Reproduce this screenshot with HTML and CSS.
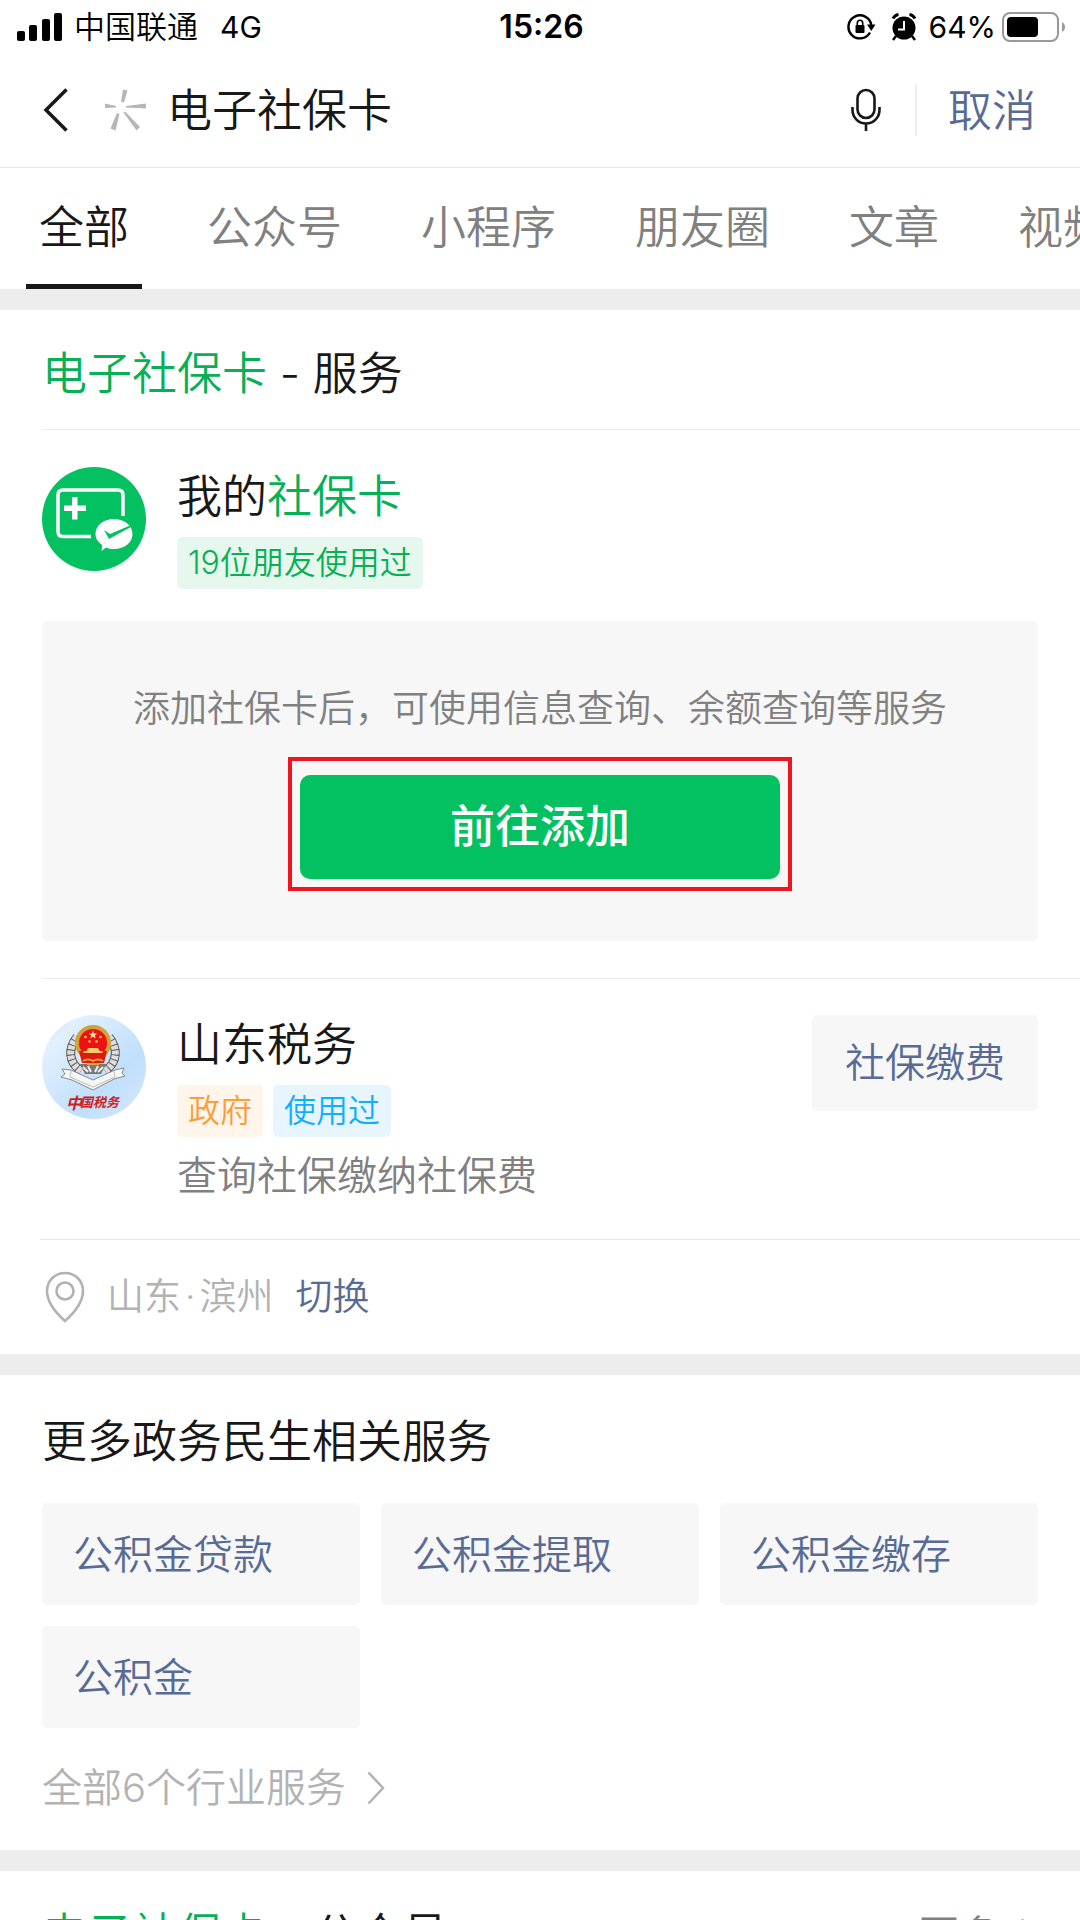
FILE: index.html
```html
<!DOCTYPE html>
<html lang="zh-CN">
<head>
    <meta charset="UTF-8">
    <meta name="viewport" content="width=device-width, initial-scale=1.0">
    <title>电子社保卡</title>
    <link rel="stylesheet" href="styles.css">
</head>
<body>
<div class="page">
    <div class="status-bar">
        <div class="status-left">
            <svg width="46" height="28" viewBox="0 0 46 28">
                <rect x="0" y="18" width="8" height="10" rx="2"/>
                <rect x="12" y="12" width="8" height="16" rx="2"/>
                <rect x="25" y="6" width="8" height="22" rx="2"/>
                <rect x="37" y="0" width="8" height="28" rx="2"/>
            </svg>
            <span class="carrier">中国联通</span>
            <span>4G</span>
        </div>
        <div class="status-time">15:26</div>
        <div class="status-right">
            <svg class="lock-icon" width="29" height="28" viewBox="0 0 29 28">
                <path d="M23 19.5A11.5 11.5 0 1 1 24.3 12" fill="none" stroke="#000" stroke-width="2.4"/>
                <path d="M20 11.5h8.5L24.3 18z"/>
                <rect x="8.5" y="12" width="9" height="8" rx="1"/>
                <path d="M10.3 12.5V10a2.7 2.7 0 0 1 5.4 0v2.5" fill="none" stroke="#000" stroke-width="1.6"/>
            </svg>
            <svg class="alarm-icon" width="26" height="28" viewBox="0 0 26 28">
                <circle cx="13" cy="15" r="11.5"/>
                <path d="M2 5.500Q4 2 7.500 1.500M24 5.500Q22 2 18.500 1.500" fill="none" stroke="#000" stroke-width="3"/>
                <path d="M5 23l-3 4M21 23l3 4" stroke="#000" stroke-width="2.5"/>
                <path d="M13 8v8.500H7" fill="none" stroke="#fff" stroke-width="2"/>
            </svg>
            <span>64%</span>
            <svg class="battery-icon" width="64" height="30" viewBox="0 0 64 30">
                <rect x="1" y="1" width="55" height="28" rx="7" fill="none" stroke="#999" stroke-width="2"/>
                <rect x="5" y="5" width="31" height="20" rx="4"/>
                <path d="M60 10c4 2 4 8 0 10z" fill="#999"/>
            </svg>
        </div>
    </div>

    <header class="search-bar">
        <button class="back-btn" aria-label="返回">
            <svg width="26" height="44" viewBox="0 0 26 44">
                <path d="M23.500 1.500L3 22l20.500 20.500" fill="none" stroke="#181818" stroke-width="3.5"/>
            </svg>
        </button>
        <svg class="search-logo" width="44" height="44" viewBox="0 0 44 44" fill="#b6b6b6">
            <path d="M19 1.500l4.500 1-3.500 12-3-1z"/>
            <path d="M1 15.500l11 2.500v1.500L1 20z"/>
            <path d="M22 18l20-2.500v5l-20-1z"/>
            <path d="M13 25l2.500 1-4 16.500-5-2z"/>
            <path d="M19.500 24.500l1.500-1L36 39l-3.500 3.500z"/>
        </svg>
        <input class="search-input" type="text" aria-label="搜索" value="电子社保卡">
        <button class="mic-btn" aria-label="语音">
            <svg width="32" height="44" viewBox="0 0 32 44" fill="none" stroke="#181818" stroke-width="2.6">
                <rect x="7.500" y="2" width="17" height="28" rx="8.500"/>
                <path d="M2.500 19v3a13.500 13.500 0 0 0 27 0v-3M16 35.500V43"/>
            </svg>
        </button>
        <button class="cancel-btn">取消</button>
    </header>

    <nav class="tabs">
        <a class="tab active" href="#">全部</a>
        <a class="tab" href="#">公众号</a>
        <a class="tab" href="#">小程序</a>
        <a class="tab" href="#">朋友圈</a>
        <a class="tab" href="#">文章</a>
        <a class="tab" href="#">视频</a>
    </nav>

    <section class="section">
        <h2 class="section-title"><span><em>电子社保卡</em> - 服务</span></h2>

        <div class="service">
            <svg class="avatar" viewBox="0 0 104 104">
                <circle cx="52" cy="52" r="52" fill="#03c160"/>
                <path d="M49 69.500H21q-5 0-5-5V28q0-5 5-5h55q5 0 5 5v21" fill="none" stroke="#fff" stroke-width="3.500"/>
                <path d="M30 30h5.500v8.500H44V44h-8.500v8.500H30V44h-8v-5.500h8z" fill="#fff"/>
                <path d="M72 52c10.500 0 18.500 6.500 18.500 15S82.500 82 72 82c-3 0-5.500-.500-8-1.500L59.500 84l.800-6C56 75.500 53.500 71.500 53.500 67c0-8.500 8-15 18.500-15z" fill="#fff"/>
                <path d="M62 63l6 4 20-8.500.500 1.800L67 72z" fill="#03c160"/>
            </svg>
            <div class="service-body">
                <h3 class="service-name">我的<em>社保卡</em></h3>
                <div class="tags">
                    <span class="tag tag-green">19位朋友使用过</span>
                </div>
            </div>
        </div>

        <div class="add-panel">
            <p>添加社保卡后，可使用信息查询、余额查询等服务</p>
            <div class="add-frame">
                <button class="add-btn">前往添加</button>
            </div>
        </div>

        <div class="service service-tax">
            <svg class="avatar" viewBox="0 0 104 104">
                <defs>
                    <linearGradient id="sky" x1="0" y1="0" x2="1" y2="1">
                        <stop offset="0" stop-color="#cfe6fc"/>
                        <stop offset=".2" stop-color="#e2f0fe"/>
                        <stop offset=".65" stop-color="#bfdffb"/>
                        <stop offset="1" stop-color="#d6e9fb"/>
                    </linearGradient>
                </defs>
                <circle cx="52" cy="52" r="52" fill="url(#sky)"/>
                <!-- wreath -->
                <path d="M35 22c-9 11-9 25 4 34M67 22c9 11 9 25-4 34" fill="none" stroke="#555" stroke-width="9"/>
                <path d="M35 22c-9 11-9 25 4 34M67 22c9 11 9 25-4 34" fill="none" stroke="#ddd" stroke-width="7" stroke-dasharray="4 1"/>
                <path d="M38 49h26l-5 10H43z" fill="#777"/>
                <path d="M41 52l5 5M46 51l3 6M61 52l-5 5M56 51l-3 6" stroke="#eee" stroke-width="2"/>
                <!-- national emblem -->
                <circle cx="51" cy="28" r="18" fill="#cfa23a"/>
                <circle cx="51" cy="28" r="14" fill="#ee1111"/>
                <path d="M37 36h28l-3 12H40z" fill="#dc1a12"/>
                <path d="M51 15.500l1.200 3h3l-2.400 2 1 3-2.800-1.800-2.800 1.800 1-3-2.400-2h3z" fill="#ffe29a"/>
                <g fill="#ffc86a">
                    <circle cx="43.500" cy="22" r="1.300"/>
                    <circle cx="47.500" cy="26.500" r="1.300"/>
                    <circle cx="54.500" cy="26.500" r="1.300"/>
                    <circle cx="58.500" cy="22" r="1.300"/>
                    <path d="M46 33h10l1.500 3h3v2h-19v-2h3z"/>
                </g>
                <path d="M41 46q5-3 10 0 5-3 10 0M45 49h12" fill="none" stroke="#dba83b" stroke-width="2"/>
                <!-- ribbon -->
                <path d="M20 54l9 1 22 10 22-10 9-2-2 5 3 3-11 3-21 11-21-10-11-3 4-3z" fill="#f7f7f7" stroke="#888" stroke-width="1"/>
                <path d="M29 56l-1 6 23 10 22-10-1-6" fill="none" stroke="#bbb" stroke-width="1"/>
                <text class="emblem-text" x="24" y="94" font-size="16">中</text>
                <text class="emblem-text" x="38" y="92" font-size="13">国税务</text>
            </svg>
            <div class="service-body">
                <h3 class="service-name">山东税务</h3>
                <div class="tags">
                    <span class="tag tag-orange">政府</span>
                    <span class="tag tag-blue">使用过</span>
                </div>
                <p class="service-desc">查询社保缴纳社保费</p>
            </div>
            <button class="pay-btn">社保缴费</button>
        </div>

        <div class="location">
            <svg width="40" height="52" viewBox="0 0 40 52" fill="none" stroke="#b2b2b2" stroke-width="2.6">
                <path d="M20 2C9.500 2 2 10 2 20c0 12 9 22 18 30 9-8 18-18 18-30C38 10 30.500 2 20 2z"/>
                <circle cx="20" cy="20" r="8.500"/>
            </svg>
            <span class="place">山东<span class="dot">·</span>滨州</span>
            <a href="#">切换</a>
        </div>
    </section>

    <section class="section">
        <h2 class="more-title">更多政务民生相关服务</h2>
        <div class="tiles">
            <button class="tile">公积金贷款</button>
            <button class="tile">公积金提取</button>
            <button class="tile">公积金缴存</button>
            <button class="tile">公积金</button>
        </div>
        <a class="all-link" href="#">
            全部6个行业服务
            <svg width="18" height="34" viewBox="0 0 18 34">
                <path d="M1.500 1.500L16 17 1.500 32.500" fill="none" stroke="#b2b2b2" stroke-width="2.500"/>
            </svg>
        </a>
    </section>

    <section class="section">
        <h2 class="section-title">
            <span><em>电子社保卡</em> - 公众号</span>
            <a class="more-link" href="#">
                更多
                <svg width="18" height="34" viewBox="0 0 18 34">
                    <path d="M1.500 1.500L16 17 1.500 32.500" fill="none" stroke="#b2b2b2" stroke-width="3"/>
                </svg>
            </a>
        </h2>
    </section>
</div>
</body>
</html>
```

FILE: styles.css
```css
* { box-sizing: border-box; margin: 0; padding: 0; }
body { font-family: Inter, "Noto Sans CJK SC", sans-serif; font-weight: 350; font-size: 45px; line-height: 60px; color: #181818; background: #fff; }
button, input { font: inherit; color: inherit; background: none; border: none; }
button { cursor: pointer; }
a { color: inherit; text-decoration: none; }
em { font-style: normal; color: #06b056; }
svg { flex: none; display: block; }
h2, h3 { font-size: 45px; font-weight: inherit; }

.page { height: 100vh; overflow: hidden; }

/* status bar */
.status-bar { display: grid; grid-template-columns: 1fr auto 1fr; align-items: center; height: 54px; padding: 0 14px 0 17px; font-size: 30px; line-height: 40px; font-weight: 400; color: #000; }
.status-left, .status-right { display: flex; align-items: center; }
.status-right { justify-content: flex-end; }
.carrier { margin: 0 22px 0 11px; font-size: 31px; font-weight: 350; }
.status-time { font-size: 32px; font-weight: 600; }
.alarm-icon { margin: 0 12px 0 15px; }
.battery-icon { margin-left: 6px; }

/* search */
.search-bar { display: flex; align-items: center; height: 114px; padding: 0 44px 2px 43px; border-bottom: 1px solid #e5e5e5; }
.search-logo { margin: 0 19px 0 35px; }
.search-input { flex: 1; min-width: 0; height: 60px; padding-top: 2px; outline: none; }
.mic-btn { margin-right: 33px; }
.cancel-btn { height: 52px; line-height: 54px; padding-left: 31px; border-left: 2px solid #ededed; font-size: 44px; color: #576b95; }

/* tabs */
.tabs { display: flex; gap: 51px; height: 121px; padding-left: 26px; overflow: hidden; white-space: nowrap; color: #808080; }
.tab { flex: none; padding: 30px 14px 0; }
.active { padding: 30px 13px 0; color: #181818; border-bottom: 5px solid #181818; }

.section { border-top: 21px solid #ededed; }
.section-title { display: flex; align-items: center; justify-content: space-between; height: 120px; margin-left: 42px; padding: 8px 42px 0 0; border-bottom: 1px solid #ededed; }
.more-link { display: flex; align-items: center; gap: 21px; font-size: 40px; color: #808080; }

.service { display: flex; gap: 31px; margin: 0 42px; padding-top: 37px; }
.avatar { width: 104px; height: 104px; }
.service-body { flex: 1; }
.tags { display: flex; gap: 10px; margin-top: 10px; }
.tag { padding: 0 11px; border-radius: 5px; font-size: 32px; line-height: 52px; }
.tag-green { background: #e6f7ee; color: #06b056; }
.tag-orange { background: #fff5eb; color: #fa9d3b; }
.tag-blue { background: #e7f5ff; color: #10aeff; }
.emblem-text { font-family: "Noto Sans CJK SC", sans-serif; font-style: italic; font-weight: 700; fill: #d0201c; }

.add-panel { margin: 32px 42px 37px; height: 320px; padding-top: 58px; border-radius: 5px; background: #f7f7f7; text-align: center; font-size: 37px; color: #808080; }
.add-frame { max-width: 504px; margin: 18px auto 0; padding: 14px 8px 8px; border: 4px solid #f0141e; }
.add-btn { display: block; width: 100%; height: 104px; border-radius: 10px; background: #03c160; color: #fff; font-size: 45px; font-weight: 500; }

.service-tax { margin-right: 0; padding: 36px 42px 33px 0; border-top: 1px solid #ededed; }
.service-desc { margin-top: 9px; font-size: 40px; color: #808080; }
.pay-btn { align-self: flex-start; height: 96px; padding: 0 33px; border-radius: 5px; background: #f7f7f7; color: #576b95; font-size: 40px; }

.location { display: flex; align-items: center; margin-left: 40px; padding-left: 5px; height: 115px; border-top: 1px solid #e5e5e5; font-size: 37px; color: #b2b2b2; }
.place { margin: 0 22px; }
.dot { margin: 0 4px; }
.location a { color: #576b95; }

.more-title { padding: 37px 42px 0; }
.tiles { display: grid; grid-template-columns: repeat(3, 1fr); gap: 21px; padding: 31px 42px 0; }
.tile { height: 102px; padding: 2px 0 0 31px; border-radius: 5px; background: #f7f7f7; color: #576b95; font-size: 40px; text-align: left; }
.all-link { display: flex; align-items: center; gap: 21px; padding: 30px 42px 32px; font-size: 40px; color: #b2b2b2; }
```
